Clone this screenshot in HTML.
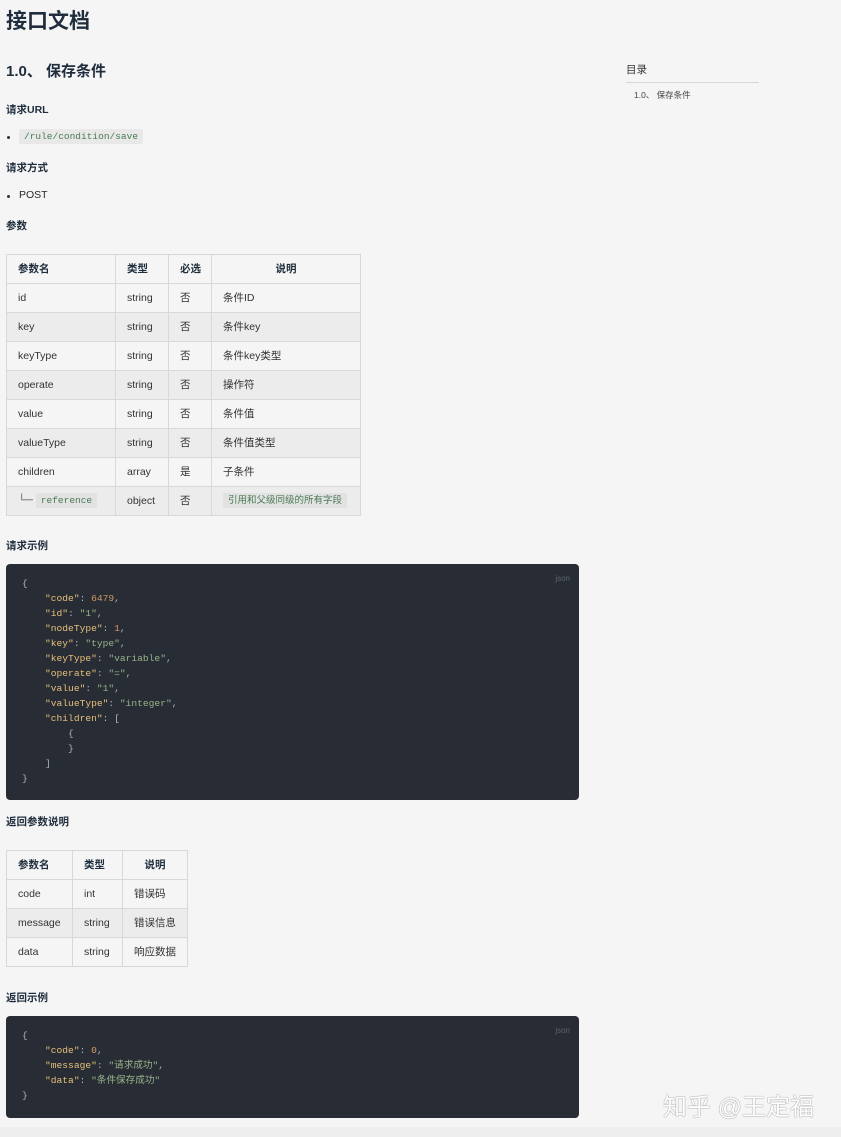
<!DOCTYPE html>
<html><head><meta charset="utf-8">
<style>
*{margin:0;padding:0;box-sizing:border-box}
html,body{width:841px;height:1137px;overflow:hidden;background:#f5f5f5;font-family:"Liberation Sans","Noto Sans CJK SC",sans-serif;color:#24292e;position:relative}
.a{position:absolute;white-space:nowrap}
h1{position:absolute;left:6px;top:5px;font-size:21px;font-weight:bold;color:#1f2d3d}
h2{position:absolute;left:6px;top:60px;font-size:15px;font-weight:bold;color:#1f2d3d}
.h4{position:absolute;left:6px;font-size:10.5px;font-weight:bold;color:#1f2d3d}
.li{position:absolute;left:6px;font-size:10.5px}
.li:before{content:"";position:absolute;left:1px;top:6px;width:3px;height:3px;border-radius:50%;background:#333}
.ic{font-family:"Liberation Mono",monospace;font-size:9.5px;color:#4a7a55;background:#e8e8e8;padding:2px 5px;border-radius:2px}
table{position:absolute;left:6px;border-collapse:collapse;font-size:10.5px;color:#333;table-layout:fixed}
td,th{border:1px solid #d8d8d8;height:29px;padding:0 0 0 11px;text-align:left;font-weight:normal;white-space:nowrap;vertical-align:middle;line-height:27px}
td span,th span{vertical-align:middle}
th{font-weight:bold;color:#1f2d3d}
tr.s td{background:#ececec}
.code{position:absolute;left:6px;width:573px;background:#282c34;border-radius:4px;font-family:"Liberation Mono","Noto Sans CJK SC",monospace;font-size:9.6px;line-height:15px;color:#abb2bf;padding:12px 16px;white-space:pre}
.k{color:#e5c07b}.n{color:#d19a66}.st{color:#98b48a}
.lang{position:absolute;right:9px;top:7px;font-family:"Liberation Sans",sans-serif;font-size:8px;color:#5c6370}
</style></head><body>
<h1>接口文档</h1>
<h2>1.0、 保存条件</h2>
<div class="h4" style="top:102px">请求URL</div>
<div class="li" style="top:130px"><span class="ic" style="margin-left:13px">/rule/condition/save</span></div>
<div class="h4" style="top:160px">请求方式</div>
<div class="li" style="top:189px"><span style="margin-left:13px">POST</span></div>
<div class="h4" style="top:218px">参数</div>
<table style="top:254px;width:355px">
<colgroup><col style="width:109px"><col style="width:53px"><col style="width:43px"><col></colgroup>
<tr><th>参数名</th><th>类型</th><th>必选</th><th style="text-align:center;padding:0">说明</th></tr>
<tr><td>id</td><td>string</td><td>否</td><td>条件ID</td></tr>
<tr class="s"><td>key</td><td>string</td><td>否</td><td>条件key</td></tr>
<tr><td>keyType</td><td>string</td><td>否</td><td>条件key类型</td></tr>
<tr class="s"><td>operate</td><td>string</td><td>否</td><td>操作符</td></tr>
<tr><td>value</td><td>string</td><td>否</td><td>条件值</td></tr>
<tr class="s"><td>valueType</td><td>string</td><td>否</td><td>条件值类型</td></tr>
<tr><td>children</td><td>array</td><td>是</td><td>子条件</td></tr>
<tr class="s"><td><span style="color:#555">└─</span> <span class="ic" style="background:#e2e2e2">reference</span></td><td>object</td><td>否</td><td><span class="ic" style="font-family:'Liberation Sans','Noto Sans CJK SC',sans-serif;background:#e2e2e2">引用和父级同级的所有字段</span></td></tr>
</table>
<div class="h4" style="top:538px">请求示例</div>
<div class="code" style="top:564px;height:236px"><span class="lang">json</span>{
    <span class="k">"code"</span>: <span class="n">6479</span>,
    <span class="k">"id"</span>: <span class="st">"1"</span>,
    <span class="k">"nodeType"</span>: <span class="n">1</span>,
    <span class="k">"key"</span>: <span class="st">"type"</span>,
    <span class="k">"keyType"</span>: <span class="st">"variable"</span>,
    <span class="k">"operate"</span>: <span class="st">"="</span>,
    <span class="k">"value"</span>: <span class="st">"1"</span>,
    <span class="k">"valueType"</span>: <span class="st">"integer"</span>,
    <span class="k">"children"</span>: [
        {
        }
    ]
}</div>
<div class="h4" style="top:814px">返回参数说明</div>
<table style="top:850px;width:182px">
<colgroup><col style="width:66px"><col style="width:50px"><col></colgroup>
<tr><th>参数名</th><th>类型</th><th style="text-align:center;padding:0">说明</th></tr>
<tr><td>code</td><td>int</td><td>错误码</td></tr>
<tr class="s"><td>message</td><td>string</td><td>错误信息</td></tr>
<tr><td>data</td><td>string</td><td>响应数据</td></tr>
</table>
<div class="h4" style="top:990px">返回示例</div>
<div class="code" style="top:1016px;height:102px"><span class="lang">json</span>{
    <span class="k">"code"</span>: <span class="n">0</span>,
    <span class="k">"message"</span>: <span class="st">"请求成功"</span>,
    <span class="k">"data"</span>: <span class="st">"条件保存成功"</span>
}</div>
<div class="a" style="left:626px;top:62px;font-size:10.5px;color:#333">目录</div>
<div class="a" style="left:626px;top:82px;width:133px;height:1px;background:#d6d6d6"></div>
<div class="a" style="left:634px;top:89px;font-size:8.5px;color:#444">1.0、 保存条件</div>
<div class="a" style="left:663px;top:1087px;font-size:24px;color:#fff;text-shadow:0 0 1px #888,0 0 1px #888">知乎 @王定福</div>
<div class="a" style="left:0;top:1127px;width:841px;height:10px;background:#eeeeee"></div>
</body></html>
